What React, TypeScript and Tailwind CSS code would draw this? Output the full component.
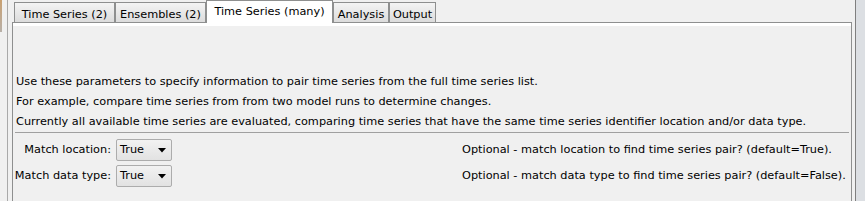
import React from "react";

function Tab({ label, w, selected }: { label: string; w: string; selected?: boolean }) {
  if (selected) {
    return (
      <div
        className={`${w} h-[23px] -mb-px relative z-10 border-t border-l border-r border-[#8e8f8f] bg-white flex justify-center pt-[3px] leading-[16px] shrink-0`}
      >
        {label}
      </div>
    );
  }
  return (
    <div
      className={`${w} h-[20px] border-t border-l border-r border-[#8e8f8f] bg-gradient-to-b from-[#f4f4f4] to-[#dcdcdc] flex justify-center pt-[4px] leading-[16px] shrink-0`}
    >
      {label}
    </div>
  );
}

function Combo() {
  return (
    <div className="w-[56px] h-[22px] rounded-[2px] border border-[#acacac] bg-gradient-to-b from-[#f2f2f2] to-[#e2e2e2] flex items-center pl-[3px] pr-[5px] justify-between">
      <span>True</span>
      <svg width="8" height="5" viewBox="0 0 8 5">
        <polygon points="0,0 8,0 4,4.5" fill="#000" />
      </svg>
    </div>
  );
}

export default function App() {
  return (
    <div className="w-[865px] h-[201px] bg-[#f0f0f0] flex overflow-hidden font-['DejaVu_Sans',sans-serif] text-[11.3px] text-black">
      <div className="w-[12px] flex shrink-0">
        <div className="w-[2px] h-[32px] bg-gradient-to-b from-[#c9a070] to-[#b8b0a8]" />
        <div className="w-[5px]" />
        <div className="w-px bg-[#a9a9a9]" />
        <div className="flex-1" />
      </div>
      <div className="w-[840px] flex flex-col shrink-0">
        <div className="h-[22px] flex items-end pl-[2px] shrink-0">
          <Tab label="Time Series (2)" w="w-[101px]" />
          <Tab label="Ensembles (2)" w="w-[91px]" />
          <Tab label="Time Series (many)" w="w-[127px]" selected />
          <Tab label="Analysis" w="w-[56px]" />
          <Tab label="Output" w="w-[47px]" />
        </div>
        <div className="flex-1 border-t border-l border-r border-[#8e8f8f] flex flex-col">
          <div className="h-[3px] bg-white" />
          <div className="pt-[46px] pl-[3px] leading-[20px]">
            <div>Use these parameters to specify information to pair time series from the full time series list.</div>
            <div>For example, compare time series from from two model runs to determine changes.</div>
            <div>
              Currently all available time series are evaluated, comparing time series that have the same time series
              identifier location and/or data type.
            </div>
          </div>
          <div className="mx-[2px] h-px bg-[#a0a0a0]" />
          <div className="mt-[6px] h-[22px] flex items-center">
            <div className="w-[98px] text-right whitespace-nowrap">Match location:</div>
            <div className="ml-[5px]">
              <Combo />
            </div>
            <div className="ml-[290px] whitespace-nowrap">Optional - match location to find time series pair? (default=True).</div>
          </div>
          <div className="mt-[4px] h-[22px] flex items-center">
            <div className="w-[98px] text-right whitespace-nowrap">Match data type:</div>
            <div className="ml-[5px]">
              <Combo />
            </div>
            <div className="ml-[290px] whitespace-nowrap">Optional - match data type to find time series pair? (default=False).</div>
          </div>
        </div>
      </div>
      <div className="w-[3px] shrink-0" />
      <div className="w-px bg-[#7f7f7f] shrink-0" />
      <div className="flex-1 bg-[#dcdfe3]" />
    </div>
  );
}
